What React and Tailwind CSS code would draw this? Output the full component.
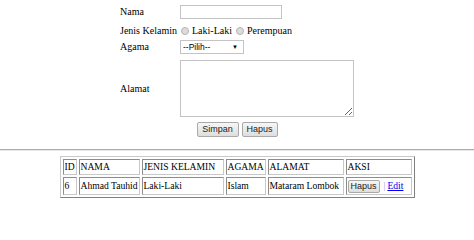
import React from "react";

function Radio() {
  return (
    <span className="inline-block w-[8px] h-[8px] rounded-full border border-[#b4b4b4] bg-[#dcdcdc] shrink-0" />
  );
}

function Btn({ children, className = "" }) {
  return (
    <button
      className={
        "flex items-center justify-center border border-[#a9a9a9] rounded-[2px] bg-gradient-to-b from-[#f6f6f6] to-[#dedede] font-['Liberation_Sans',Arial,sans-serif] text-[9px] leading-none text-[#222] " +
        className
      }
    >
      {children}
    </button>
  );
}

const tdBase =
  "border border-t-[#8c8c8c] border-l-[#8c8c8c] border-b-[#c8c8c8] border-r-[#c8c8c8] pl-[1px] pr-0 py-0 whitespace-nowrap text-left align-middle";

export default function App() {
  return (
    <div className="w-[474px] h-[232px] bg-white text-black font-['Liberation_Serif','Times_New_Roman',serif] text-[10px] leading-none overflow-hidden">
      <div className="flex justify-center pt-[5px]">
        <div className="flex flex-col w-[234px]">
          <div className="flex items-center h-[14px]">
            <div className="w-[60px]">Nama</div>
            <div className="w-[102px] h-[14px] border border-[#c4c4c4] bg-white" />
          </div>
          <div className="flex items-center h-[18px] mt-[3px]">
            <div className="w-[60px] whitespace-nowrap">Jenis Kelamin</div>
            <div className="flex items-center pl-[1px] whitespace-nowrap">
              <Radio />
              <span className="ml-[3px]">Laki-Laki</span>
              <span className="ml-[4px] flex items-center">
                <Radio />
              </span>
              <span className="ml-[3px]">Perempuan</span>
            </div>
          </div>
          <div className="flex items-center h-[14px]">
            <div className="w-[60px]">Agama</div>
            <div className="w-[64px] h-[14px] border border-[#c4c4c4] bg-white flex items-center justify-between pl-[2px] pr-[5px] font-['Liberation_Sans',Arial,sans-serif] text-[8.5px]">
              <span>--Pilih--</span>
              <span className="text-[6px]">▼</span>
            </div>
          </div>
          <div className="flex items-center mt-[6px]">
            <div className="w-[60px]">Alamat</div>
            <textarea
              className="w-[174px] h-[57px] border border-[#c4c4c4] bg-white outline-none"
              readOnly
            />
          </div>
          <div className="flex justify-center gap-[3px] mt-[5px]">
            <Btn className="w-[42px] h-[15px]">Simpan</Btn>
            <Btn className="w-[36px] h-[15px]">Hapus</Btn>
          </div>
        </div>
      </div>

      <div className="mt-[12px] h-[2px] border-t border-t-[#adadad] border-b border-b-[#e8e8e8]" />

      <div className="flex justify-center mt-[5px]">
        <table className="w-[355px] table-fixed border-separate border-spacing-[2px] border border-t-[#c8c8c8] border-l-[#c8c8c8] border-b-[#808080] border-r-[#808080] text-[9.6px] leading-none">
          <tbody>
            <tr className="h-[16px]">
              <td className={tdBase + " w-[14px]"}>ID</td>
              <td className={tdBase + " w-[61px]"}>NAMA</td>
              <td className={tdBase + " w-[82px]"}>JENIS KELAMIN</td>
              <td className={tdBase + " w-[40px]"}>AGAMA</td>
              <td className={tdBase + " w-[76px]"}>ALAMAT</td>
              <td className={tdBase + " w-[66px]"}>AKSI</td>
            </tr>
            <tr className="h-[18px]">
              <td className={tdBase}>6</td>
              <td className={tdBase}>Ahmad Tauhid</td>
              <td className={tdBase}>Laki-Laki</td>
              <td className={tdBase}>Islam</td>
              <td className={tdBase}>Mataram Lombok</td>
              <td className={tdBase}>
                <div className="flex items-center">
                  <Btn className="w-[32px] h-[13px]">Hapus</Btn>
                  <span className="ml-[4px] text-[#9a9ad0]">|</span>
                  <a href="#" className="ml-[2px] text-[#0000ee] underline">
                    Edit
                  </a>
                </div>
              </td>
            </tr>
          </tbody>
        </table>
      </div>
    </div>
  );
}
